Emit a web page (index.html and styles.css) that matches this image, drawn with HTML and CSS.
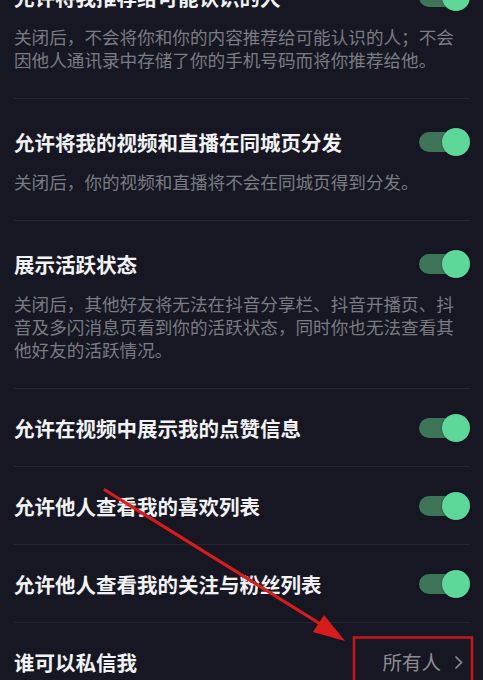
FILE: index.html
```html
<!DOCTYPE html>
<html>
<head>
	<meta charset="utf-8">
	<title>隐私设置</title>
	<link rel="stylesheet" href="styles.css">
</head>
<body>
	<div class="settings">
		<div class="row row-first">
			<div class="row-head">
				<span class="title">允许将我推荐给可能认识的人</span>
				<span class="switch on"><span class="knob"></span></span>
			</div>
			<p class="desc">关闭后，不会将你和你的内容推荐给可能认识的人；不会因他人通讯录中存储了你的手机号码而将你推荐给他。</p>
		</div>

		<div class="row">
			<div class="row-head">
				<span class="title">允许将我的视频和直播在同城页分发</span>
				<span class="switch on"><span class="knob"></span></span>
			</div>
			<p class="desc">关闭后，你的视频和直播将不会在同城页得到分发。</p>
		</div>

		<div class="row">
			<div class="row-head">
				<span class="title">展示活跃状态</span>
				<span class="switch on"><span class="knob"></span></span>
			</div>
			<p class="desc">关闭后，其他好友将无法在抖音分享栏、抖音开播页、抖音及多闪消息页看到你的活跃状态，同时你也无法查看其他好友的活跃情况。</p>
		</div>

		<div class="row row-simple">
			<div class="row-head">
				<span class="title">允许在视频中展示我的点赞信息</span>
				<span class="switch on"><span class="knob"></span></span>
			</div>
		</div>

		<div class="row row-simple">
			<div class="row-head">
				<span class="title">允许他人查看我的喜欢列表</span>
				<span class="switch on"><span class="knob"></span></span>
			</div>
		</div>

		<div class="row row-simple">
			<div class="row-head">
				<span class="title">允许他人查看我的关注与粉丝列表</span>
				<span class="switch on"><span class="knob"></span></span>
			</div>
		</div>

		<div class="row row-simple row-last">
			<div class="row-head">
				<span class="title">谁可以私信我</span>
				<span class="value">所有人
					<svg class="chevron" width="9" height="15" viewBox="0 0 9 15"><path d="M1.5 1.5 L7.5 7.5 L1.5 13.5" fill="none" stroke="#8c8d93" stroke-width="1.6"/></svg>
				</span>
			</div>
		</div>
	</div>

	<!-- пометка поверх скриншота -->
	<svg class="mark" width="483" height="680" viewBox="0 0 483 680">
		<line x1="105" y1="490" x2="322" y2="625" stroke="#d81c1c" stroke-width="3.2" stroke-linecap="round"/>
		<polygon points="345,641 313,632 324,615" fill="#d81c1c"/>
		<rect x="354" y="637.5" width="118" height="60" fill="none" stroke="#c3161b" stroke-width="2.6"/>
	</svg>
</body>
</html>
```

FILE: styles.css
```css
html, body {
	background-color: #161722;
}
body {
	margin: 0;
	height: 680px;
	overflow: hidden;
	position: relative;

	font-family: "Noto Sans CJK SC", "Noto Sans", sans-serif;
}
.settings {
	padding: 0 13px 0 14px;
}
.row {
	padding: 28px 0 27px 0;
	border-bottom: 1px solid #24252f;
}
.row-first {
	margin-top: -46px;
}
.row-simple {
	padding: 24px 0 23px 0;
}
.row-last {
	border-bottom: none;
}
.row-head {
	display: flex;
	align-items: center;
	justify-content: space-between;
	height: 30px;
}
.title {
	color: #f2f2f4;
	font-size: 20.5px;
	font-weight: 700;
	line-height: 30px;
}
.desc {
	margin: 13px 0 0 0;
	color: #7a7b83;
	font-size: 17.6px;
	line-height: 23px;
}
.switch {
	position: relative;
	width: 51px;
	height: 28px;
	flex-shrink: 0;
}
.switch::before {
	content: "";
	position: absolute;
	left: 0;
	top: 4px;
	width: 44px;
	height: 20px;
	border-radius: 10px;
	background-color: #3e7559;
}
.knob {
	position: absolute;
	right: 0;
	top: 0;
	width: 28px;
	height: 28px;
	border-radius: 50%;
	background-color: #5dd899;
	box-shadow: 0 0 2px rgba(0,0,0,.5);
}
.value {
	display: flex;
	align-items: center;
	gap: 13px;
	margin-right: 7px;
	color: #8c8d93;
	font-size: 19.5px;
	line-height: 30px;
}
.mark {
	position: absolute;
	left: 0;
	top: 0;
	pointer-events: none;
}
```
